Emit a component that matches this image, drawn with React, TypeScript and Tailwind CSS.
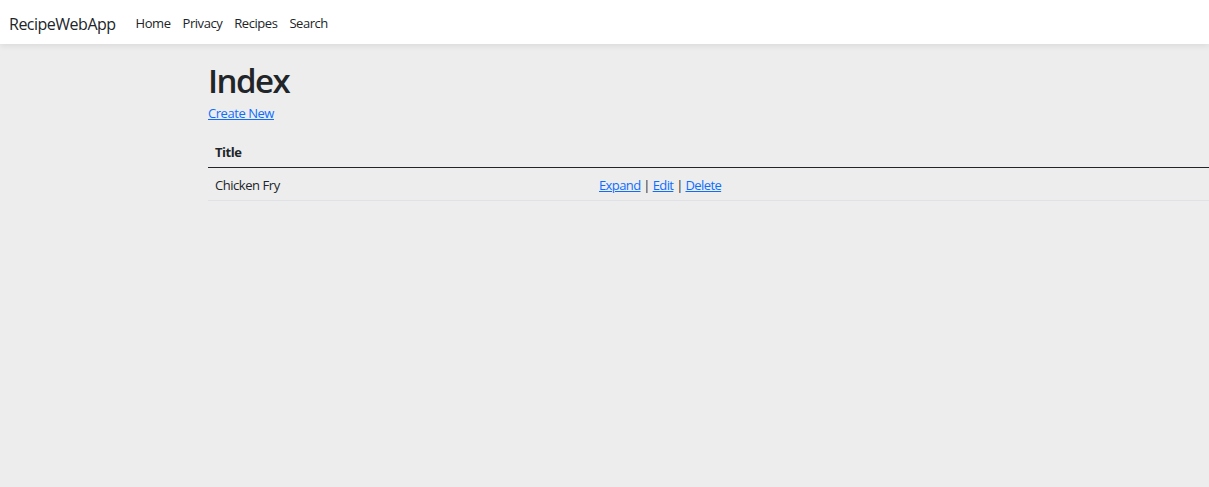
export default function App() {
  return (
    <div className="min-h-[487px] bg-[#ededed] text-[#212529] font-['Open_Sans',sans-serif] text-[13px] tracking-[-0.45px]">
      {/* Navbar */}
      <nav className="h-[44px] bg-white shadow-[0_2px_6px_rgba(0,0,0,0.08)] flex items-center pl-[9px] pt-[3px]">
        <a href="#" className="text-[16px] tracking-[-0.5px] mr-[20px] text-[#212529]">
          RecipeWebApp
        </a>
        <ul className="flex gap-[12px]">
          <li><a href="#">Home</a></li>
          <li><a href="#">Privacy</a></li>
          <li><a href="#">Recipes</a></li>
          <li><a href="#">Search</a></li>
        </ul>
      </nav>

      {/* Content */}
      <main className="pl-[208px] pt-[17px]">
        <h1 className="text-[33px] leading-[40px] font-semibold tracking-[-1.5px]">Index</h1>
        <p className="mt-[2px] mb-[13px] leading-[20px]">
          <a href="#" className="text-[#0d6efd] underline">Create New</a>
        </p>
        <table className="w-full border-collapse text-left">
          <thead>
            <tr className="border-b border-[#212529]">
              <th className="w-[384px] px-[7px] pt-[6px] pb-[5px] leading-[20px] font-bold">Title</th>
              <th className="px-[7px] pt-[6px] pb-[5px]"></th>
            </tr>
          </thead>
          <tbody>
            <tr className="border-b border-[#dee2e6]">
              <td className="px-[7px] pt-[7px] pb-[5px] leading-[20px]">Chicken Fry</td>
              <td className="px-[7px] pt-[7px] pb-[5px] leading-[20px] tracking-[-0.6px]">
                <a href="#" className="text-[#0d6efd] underline">Expand</a> |{" "}
                <a href="#" className="text-[#0d6efd] underline">Edit</a> |{" "}
                <a href="#" className="text-[#0d6efd] underline">Delete</a>
              </td>
            </tr>
          </tbody>
        </table>
      </main>
    </div>
  );
}
